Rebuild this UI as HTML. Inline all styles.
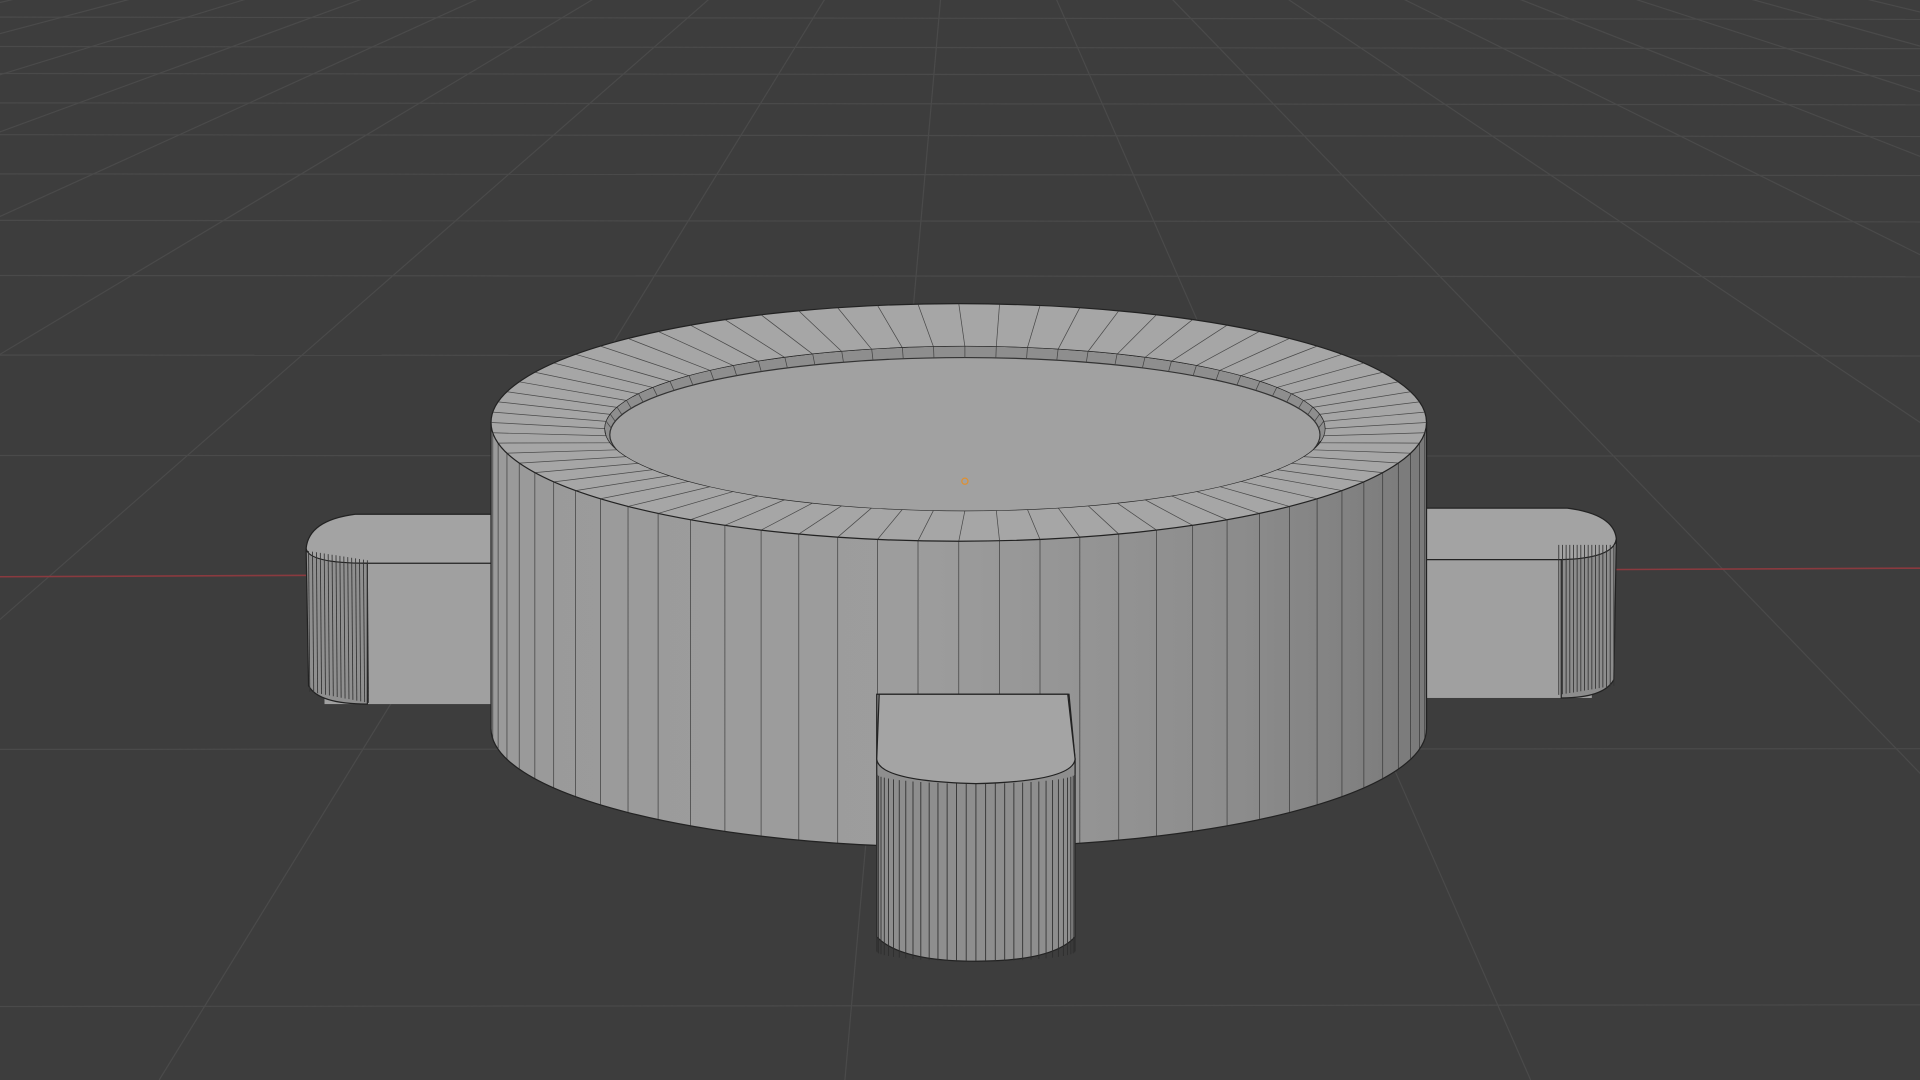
<!DOCTYPE html>
<html><head><meta charset="utf-8"><style>
html,body{margin:0;padding:0;background:#3d3d3d;overflow:hidden}
svg{display:block}
</style></head><body>
<svg id="s" width="1920" height="1080" viewBox="0 0 1568 882" xmlns="http://www.w3.org/2000/svg">
<defs>
<linearGradient id="side" x1="0" x2="1" y1="0" y2="0">
<stop offset="0" stop-color="#9a9a9a"/><stop offset="0.45" stop-color="#9d9d9d"/><stop offset="0.8" stop-color="#8c8c8c"/><stop offset="1" stop-color="#7a7a7a"/>
</linearGradient>
</defs>
<rect width="1568" height="882" fill="#3d3d3d"/>
<g id="grid" stroke="#4a4a4a" stroke-width="1"></g>
<line x1="0" y1="471" x2="1568" y2="464" stroke="#8a3a3f" stroke-width="1.3"/>
<g>
<rect x="265" y="440" width="150" height="135" fill="#a0a0a0"/>
<path d="M250 448 Q252 425 290 420 L410 420 L410 460 L290 460 Q252 460 250 448Z" fill="#a3a3a3" stroke="#222" stroke-width="1"/>
<path d="M250 448 L252 560 Q260 575 300 575 L300 460 Q252 460 250 448Z" fill="#8f8f8f" stroke="#222" stroke-width="1"/>
<g id="ltl" stroke="#333" stroke-width="0.7"></g>
</g>
<g>
<rect x="1160" y="430" width="140" height="140" fill="#a0a0a0"/>
<path d="M1160 415 L1280 415 Q1318 420 1320 440 Q1318 456 1280 457 L1160 457Z" fill="#a3a3a3" stroke="#222" stroke-width="1"/>
<path d="M1275 457 Q1318 456 1320 440 L1318 555 Q1310 570 1275 570Z" fill="#8c8c8c" stroke="#222" stroke-width="1"/>
<g id="rtl" stroke="#333" stroke-width="0.7"></g>
</g>
<path id="body" fill="url(#side)" stroke="#222" stroke-width="1"/>
<g id="sidel" stroke="#2a2a2a" stroke-width="0.6" opacity="0.8"></g>
<ellipse cx="783" cy="345" rx="382" ry="97" fill="#a6a6a6" stroke="#222" stroke-width="1"/>
<g id="ringl" stroke="#333" stroke-width="0.6" opacity="0.8"></g>
<ellipse cx="788" cy="350" rx="294" ry="67" fill="#9c9c9c" stroke="#222" stroke-width="1"/>
<clipPath id="ic"><ellipse cx="788" cy="350" rx="294" ry="67"/></clipPath>
<g clip-path="url(#ic)">
<path d="M494 350 A294 67 0 0 1 1082 350 L1082 370 A290 62 0 0 0 498 370Z" fill="#8e8e8e"/>
<ellipse cx="788" cy="355" rx="290" ry="63" fill="#a1a1a1" stroke="#333" stroke-width="1"/>
<g id="innl" stroke="#444" stroke-width="0.6"></g>
</g>
<circle cx="788" cy="393" r="2.5" fill="none" stroke="#e09030" stroke-width="1"/>
<path d="M716 567 L873 567 L878 620 L878 765 Q860 785 797 785 Q735 785 716 765Z" fill="#8e8e8e" stroke="#222" stroke-width="1"/>
<path d="M718 567 L872 567 L878 620 Q876 638 797 640 Q718 638 716 620Z" fill="#a4a4a4" stroke="#222" stroke-width="1"/>
<g id="ftl" stroke="#2e2e2e" stroke-width="0.7"></g>
</svg>
<script>
var NS="http://www.w3.org/2000/svg";
function L(g,x1,y1,x2,y2,c){var l=document.createElementNS(NS,"line");l.setAttribute("x1",x1);l.setAttribute("y1",y1);l.setAttribute("x2",x2);l.setAttribute("y2",y2);if(c)l.setAttribute("stroke",c);document.getElementById(g).appendChild(l);}
[14,38,60,84,110,142,180,225,290,372,612,822].forEach(function(y){L("grid",0,y,1568,y-(y-470)*0.004);});
var vx=784,vy=-180;
for(var i=-10;i<=10;i++){var bx=690+i*560;L("grid",vx+(bx-vx)*0.04,vy+(1062)*0.04,bx,882);}
var cx=783,cy=345,rx=382,ry=97,h=250;
document.getElementById("body").setAttribute("d","M"+(cx-rx)+" "+cy+" L"+(cx-rx)+" "+(cy+h)+" A"+rx+" "+ry+" 0 0 0 "+(cx+rx)+" "+(cy+h)+" L"+(cx+rx)+" "+cy+"Z");
var N=72;
for(var k=0;k<N;k++){var t=2*Math.PI*k/N;var c=Math.cos(t),s=Math.sin(t);
 if(s>0){L("sidel",cx+rx*c,cy+ry*s,cx+rx*c,cy+h+ry*s);}
 L("ringl",cx+rx*c,cy+ry*s,788+294*c,350+67*s);
 if(s<0){L("innl",788+294*c,350+67*s,788+290*c,355+63*s);}
}
for(var k=0;k<16;k++){var x=252+k*3.2;L("ltl",x,450+k*0.5,x+1,565+k*0.6);}
for(var k=0;k<16;k++){var x=1318-k*3;L("rtl",x,445,x,560+k*0.5);}
for(var k=0;k<=32;k++){var t=Math.PI*k/32;var x=797-81*Math.cos(t);var y=632+8*Math.sin(t);L("ftl",x,y,x,777+8*Math.sin(t));}
</script>
</body></html>
